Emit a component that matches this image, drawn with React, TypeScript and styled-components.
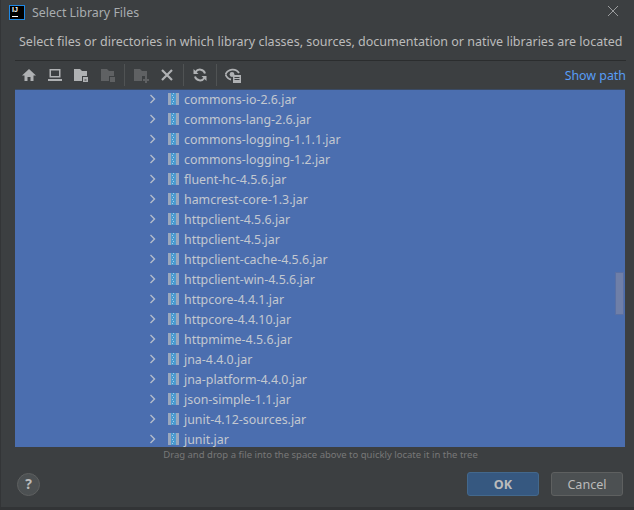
import React from 'react';
import styled, { createGlobalStyle } from 'styled-components';

const GlobalStyle = createGlobalStyle`
  html, body {
    margin: 0;
    padding: 0;
    width: 634px;
    height: 510px;
    overflow: hidden;
    background: #3c3f41;
  }
  * {
    box-sizing: border-box;
  }
`;

const Dialog = styled.div`
  width: 634px;
  height: 510px;
  display: flex;
  flex-direction: column;
  background: #3c3f41;
  color: #bbbbbb;
  font-family: "Noto Sans", "Open Sans", sans-serif;
  font-size: 13px;
  border-left: 1px solid #333537;
  border-bottom: 3px solid #323436;
`;

const TitleBar = styled.div`
  height: 24px;
  display: flex;
  align-items: center;
  padding-left: 8px;
  flex-shrink: 0;
`;

const AppLogo = styled.div`
  width: 16px;
  height: 15px;
  background: #000;
  border: 1px solid #1e88e5;
  color: #fff;
  font-size: 7px;
  font-weight: 700;
  line-height: 8px;
  padding-left: 2px;
  position: relative;
  font-family: "Liberation Sans", sans-serif;
  &::after {
    content: '';
    position: absolute;
    left: 2px;
    bottom: 2px;
    width: 6px;
    height: 1px;
    background: #fff;
  }
`;

const TitleText = styled.div`
  margin-left: 7px;
  font-size: 12.4px;
  color: #a9adb0;
  flex: 1;
`;

const CloseButton = styled.svg`
  width: 12px;
  height: 12px;
  margin-right: 15px;
  margin-top: -2px;
`;

const Description = styled.div`
  height: 36px;
  padding: 8px 0 0 18px;
  line-height: 20px;
  white-space: nowrap;
  flex-shrink: 0;
  font-size: 12.5px;
`;

const Content = styled.div`
  padding: 0 8px 0 14px;
  display: flex;
  flex-direction: column;
`;

const Toolbar = styled.div`
  height: 29px;
  border-top: 1px solid #2b2d2e;
  display: flex;
  align-items: center;
  padding-left: 6px;
  flex-shrink: 0;
`;

const ToolButton = styled.svg`
  width: 16px;
  height: 16px;
  margin-right: 10.2px;
  flex-shrink: 0;
`;

const ToolSeparator = styled.div`
  width: 1px;
  height: 22px;
  background: #505354;
  margin-right: 8px;
  margin-left: -2.2px;
  flex-shrink: 0;
`;

const ShowPath = styled.a`
  margin-left: auto;
  color: #589df6;
  font-size: 12.4px;
`;

const Tree = styled.div`
  position: relative;
  height: 358px;
  width: 610px;
  background: #4b6eaf;
  overflow: hidden;
  border-top: 1px solid #3a4a64;
`;

const TreeRow = styled.div`
  height: 20px;
  display: flex;
  align-items: center;
  padding-left: 134px;
  color: #c3c8d0;
  font-size: 12.4px;
  white-space: nowrap;
  &:first-child {
    margin-top: -1px;
  }
`;

const Chevron = styled.svg`
  width: 8px;
  height: 10px;
  margin-right: 11px;
`;

const JarIcon = styled.svg`
  width: 12px;
  height: 14px;
  margin-right: 4px;
`;

const ScrollThumb = styled.div`
  position: absolute;
  top: 182px;
  right: 1px;
  width: 9px;
  height: 43px;
  background: #6f7fa8;
  border: 1px solid #5a70a3;
`;

const Hint = styled.div`
  height: 16px;
  text-align: center;
  font-size: 9.5px;
  line-height: 16px;
  color: #787878;
`;

const Footer = styled.div`
  display: flex;
  align-items: center;
  padding: 9px 11px 0 16px;
`;

const HelpButton = styled.div`
  width: 23px;
  height: 23px;
  border-radius: 50%;
  background: #4c5052;
  border: 1px solid #5e6060;
  color: #bbbbbb;
  font-weight: 700;
  font-size: 14px;
  line-height: 20px;
  text-align: center;
  margin-right: auto;
`;

const DialogButton = styled.div<{ $primary?: boolean }>`
  width: 72px;
  height: 24px;
  margin-left: 12px;
  border-radius: 3px;
  text-align: center;
  line-height: 23px;
  font-size: 12.6px;
  font-weight: ${(p) => (p.$primary ? 700 : 400)};
  background: ${(p) => (p.$primary ? '#365880' : '#4c5052')};
  border: 1px solid ${(p) => (p.$primary ? '#43688c' : '#5e6060')};
  color: #bbbbbb;
`;

const FILES = [
  'commons-io-2.6.jar',
  'commons-lang-2.6.jar',
  'commons-logging-1.1.1.jar',
  'commons-logging-1.2.jar',
  'fluent-hc-4.5.6.jar',
  'hamcrest-core-1.3.jar',
  'httpclient-4.5.6.jar',
  'httpclient-4.5.jar',
  'httpclient-cache-4.5.6.jar',
  'httpclient-win-4.5.6.jar',
  'httpcore-4.4.1.jar',
  'httpcore-4.4.10.jar',
  'httpmime-4.5.6.jar',
  'jna-4.4.0.jar',
  'jna-platform-4.4.0.jar',
  'json-simple-1.1.jar',
  'junit-4.12-sources.jar',
  'junit.jar',
];

const App: React.FC = () => {
  return (
    <Dialog>
      <GlobalStyle />
      <TitleBar>
        <AppLogo>IJ</AppLogo>
        <TitleText>Select Library Files</TitleText>
        <CloseButton viewBox="0 0 12 12">
          <path d="M1 1l10 10M11 1L1 11" stroke="#9a9c9e" strokeWidth="1" fill="none" />
        </CloseButton>
      </TitleBar>
      <Description>
        Select files or directories in which library classes, sources, documentation or native libraries are located
      </Description>
      <Content>
        <Toolbar>
          {/* home */}
          <ToolButton viewBox="0 0 16 16">
            <path d="M8 2L1 8.5h2.5V14h3v-4h3v4h3V8.5H15z" fill="#afb1b3" />
          </ToolButton>
          {/* desktop */}
          <ToolButton viewBox="0 0 16 16">
            <path d="M2.5 2h11v8.5h-11zM4 3.5V9h8V3.5zM1 12h14v2H1z" fill="#afb1b3" fillRule="evenodd" />
          </ToolButton>
          {/* project folder */}
          <ToolButton viewBox="0 0 16 16">
            <path d="M1 2h6l2 2h5v5H9v5H1z" fill="#afb1b3" />
            <path d="M10 10h5v5h-5z" fill="#afb1b3" />
            <path d="M11.5 12.5h2v1h-2z" fill="#3c3f41" />
          </ToolButton>
          {/* module folder, disabled */}
          <ToolButton viewBox="0 0 16 16">
            <path d="M1 2h6l2 2h5v5H9v5H1z" fill="#5f6163" />
            <path d="M10 10h5v5h-5z" fill="#5f6163" />
          </ToolButton>
          <ToolSeparator />
          {/* new folder, disabled */}
          <ToolButton viewBox="0 0 16 16">
            <path d="M1 2h6l2 2h5v5H9v5H1z" fill="#5f6163" />
            <path d="M12 9h2v3h2v2h-2v2h-2v-2h-2v-2h2z" fill="#5f6163" />
          </ToolButton>
          {/* delete */}
          <ToolButton viewBox="0 0 16 16">
            <path d="M3 3l10 10M13 3L3 13" stroke="#afb1b3" strokeWidth="2.2" fill="none" />
          </ToolButton>
          <ToolSeparator />
          {/* refresh */}
          <ToolButton viewBox="0 0 16 16">
            <path d="M13 6.5A5.2 5.2 0 0 0 3.6 5" stroke="#afb1b3" strokeWidth="2" fill="none" />
            <path d="M1.5 2v5h5z" fill="#afb1b3" />
            <path d="M3 9.5A5.2 5.2 0 0 0 12.4 11" stroke="#afb1b3" strokeWidth="2" fill="none" />
            <path d="M14.5 14V9h-5z" fill="#afb1b3" />
          </ToolButton>
          <ToolSeparator />
          {/* show hidden */}
          <ToolButton viewBox="0 0 16 16">
            <path d="M0.5 7.5C3 1.5 11 1 14 6" stroke="#afb1b3" strokeWidth="1.8" fill="none" />
            <path d="M0.5 7.5C1.5 10 3.5 12 6 12.5" stroke="#afb1b3" strokeWidth="1.8" fill="none" />
            <circle cx="7" cy="7.5" r="2.4" fill="#afb1b3" />
            <path d="M8 8h8v8H8z" fill="#afb1b3" />
            <path d="M9.5 10h5v1h-5zM9.5 12h5v1h-5z" fill="#3c3f41" />
          </ToolButton>
          <ShowPath>Show path</ShowPath>
        </Toolbar>
        <Tree>
          {FILES.map((name) => (
            <TreeRow key={name}>
              <Chevron viewBox="0 0 8 10">
                <path d="M1.5 1l4 4-4 4" stroke="#b4bccb" strokeWidth="1.4" fill="none" />
              </Chevron>
              <JarIcon viewBox="0 0 12 14">
                <path d="M0 1h3v12H0zM8 1h3v12H8z" fill="#9aa7bd" />
                <path d="M3 1h5v12H3z" fill="#4a9ad0" />
                <path d="M5 1h1v1H5zM4 3h1v1H4zM5 5h1v1H5zM4 7h1v1H4zM5 9h1v1H5zM4 11h1v1H4z" fill="#a8cde6" />
              </JarIcon>
              {name}
            </TreeRow>
          ))}
          <ScrollThumb />
        </Tree>
        <Hint>Drag and drop a file into the space above to quickly locate it in the tree</Hint>
      </Content>
      <Footer>
        <HelpButton>?</HelpButton>
        <DialogButton $primary>OK</DialogButton>
        <DialogButton>Cancel</DialogButton>
      </Footer>
    </Dialog>
  );
};

export default App;
